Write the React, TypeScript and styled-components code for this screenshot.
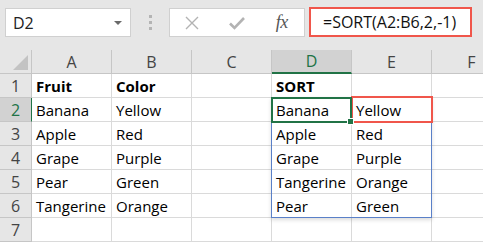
import React from 'react';
import styled, { createGlobalStyle } from 'styled-components';

const GlobalStyle = createGlobalStyle`
  html, body {
    margin: 0;
    padding: 0;
    background: #ffffff;
    overflow: hidden;
  }
  body {
    font-family: "Open Sans", "Noto Sans", "DejaVu Sans", sans-serif;
  }
`;

const GREEN = '#217346';

const Window = styled.div`
  width: 483px;
  height: 242px;
  overflow: hidden;
  background: #ffffff;
`;

const FormulaBar = styled.div`
  display: flex;
  align-items: flex-start;
  box-sizing: border-box;
  height: 50px;
  padding: 8px 0 0 5px;
  background: #e6e6e6;
`;

const NameBox = styled.div`
  display: flex;
  align-items: center;
  justify-content: space-between;
  box-sizing: border-box;
  width: 126px;
  height: 29px;
  padding: 0 8px 0 7px;
  background: #ffffff;
  border: 1px solid #d0d0d0;
  font-size: 16px;
  color: #222;
`;

const Caret = styled.span`
  width: 0;
  height: 0;
  border-left: 4px solid transparent;
  border-right: 4px solid transparent;
  border-top: 4px solid #6a6a6a;
`;

const Grip = styled.div`
  display: flex;
  flex-direction: column;
  align-items: center;
  justify-content: center;
  gap: 3px;
  width: 38px;
  height: 29px;
`;

const GripDot = styled.span`
  width: 3px;
  height: 3px;
  background: #b4b4b4;
`;

const IconBox = styled.div`
  display: flex;
  align-items: center;
  box-sizing: border-box;
  width: 136px;
  height: 29px;
  background: #ffffff;
  border: 1px solid #d0d0d0;
`;

const IconSlot = styled.span`
  display: flex;
  align-items: center;
  justify-content: center;
  width: 45px;
  height: 100%;
`;

const Fx = styled.span`
  font-family: "Liberation Serif", "DejaVu Serif", serif;
  font-style: italic;
  font-size: 18px;
  color: #555;
  letter-spacing: -0.5px;
`;

const FormulaInput = styled.div`
  display: flex;
  align-items: center;
  box-sizing: border-box;
  width: 163px;
  height: 30px;
  margin: -1px 0 0 4px;
  padding-left: 12px;
  background: #ffffff;
  border: 2px solid #f0564b;
  font-size: 16px;
  color: #111;
`;

const SheetArea = styled.div`
  position: relative;
  width: 512px;
`;

const Sheet = styled.div`
  display: grid;
  grid-template-columns: 32px repeat(6, 80px);
  grid-auto-rows: 24px;
`;

const Overlay = styled(Sheet)`
  position: absolute;
  inset: 0;
  pointer-events: none;
`;

const Corner = styled.div`
  position: relative;
  box-sizing: border-box;
  background: #e6e6e6;
  border-right: 1px solid #c6c6c6;
  border-bottom: 1px solid #c6c6c6;
`;

const CornerTriangle = styled.span`
  position: absolute;
  right: 3px;
  bottom: 3px;
  width: 0;
  height: 0;
  border-left: 15px solid transparent;
  border-bottom: 15px solid #c3c3c3;
`;

const ColHeader = styled.div<{ $active?: boolean }>`
  display: flex;
  align-items: center;
  justify-content: center;
  box-sizing: border-box;
  background: ${(p) => (p.$active ? '#d2d2d2' : '#e6e6e6')};
  border-right: 1px solid #c6c6c6;
  border-bottom: ${(p) => (p.$active ? `2px solid ${GREEN}` : '1px solid #c6c6c6')};
  font-size: 16px;
  line-height: 24px;
  color: ${(p) => (p.$active ? GREEN : '#444')};
`;

const RowHeader = styled.div<{ $active?: boolean }>`
  display: flex;
  align-items: center;
  justify-content: center;
  box-sizing: border-box;
  background: ${(p) => (p.$active ? '#d2d2d2' : '#e6e6e6')};
  border-right: 1px solid ${(p) => (p.$active ? GREEN : '#c6c6c6')};
  border-bottom: 1px solid #c6c6c6;
  font-size: 16px;
  line-height: 24px;
  color: ${(p) => (p.$active ? GREEN : '#444')};
`;

const Cell = styled.div<{ $bold?: boolean }>`
  box-sizing: border-box;
  padding-left: 4px;
  border-right: 1px solid #dadada;
  border-bottom: 1px solid #dadada;
  font-size: 15px;
  line-height: 24px;
  font-weight: ${(p) => (p.$bold ? 700 : 400)};
  color: #000;
  white-space: nowrap;
  overflow: hidden;
`;

const Range = styled.div<{ $col: string; $row: string }>`
  grid-column: ${(p) => p.$col};
  grid-row: ${(p) => p.$row};
  margin: -1px 0 0 -1px;
`;

const SpillRange = styled(Range)`
  border: 1px solid #5a80c8;
  box-shadow: 0 2px 4px rgba(0, 0, 0, 0.14);
`;

const ActiveCell = styled(Range)`
  position: relative;
  margin: -1px 0 -1px -1px;
  border: 2px solid ${GREEN};
`;

const FillHandle = styled.span`
  position: absolute;
  right: -4px;
  bottom: -4px;
  width: 5px;
  height: 5px;
  background: ${GREEN};
  border: 1px solid #ffffff;
`;

const Callout = styled(Range)`
  margin: -2px -1px -1px -1px;
  border: 2px solid #f0564b;
`;

const columns = ['A', 'B', 'C', 'D', 'E', 'F'];

const rows: string[][] = [
  ['Fruit', 'Color', '', 'SORT', '', ''],
  ['Banana', 'Yellow', '', 'Banana', 'Yellow', ''],
  ['Apple', 'Red', '', 'Apple', 'Red', ''],
  ['Grape', 'Purple', '', 'Grape', 'Purple', ''],
  ['Pear', 'Green', '', 'Tangerine', 'Orange', ''],
  ['Tangerine', 'Orange', '', 'Pear', 'Green', ''],
  ['', '', '', '', '', ''],
];

const CancelIcon = () => (
  <svg width="16" height="16" viewBox="0 0 16 16">
    <path d="M2 2 L14 14 M14 2 L2 14" stroke="#b3b3b3" strokeWidth="1.4" fill="none" />
  </svg>
);

const EnterIcon = () => (
  <svg width="18" height="16" viewBox="0 0 18 16">
    <path d="M2 8.5 L6.5 13 L16 3" stroke="#b3b3b3" strokeWidth="2.6" fill="none" />
  </svg>
);

const App = () => {
  return (
    <Window>
      <GlobalStyle />
      <FormulaBar>
        <NameBox>
          D2
          <Caret />
        </NameBox>
        <Grip>
          <GripDot />
          <GripDot />
          <GripDot />
        </Grip>
        <IconBox>
          <IconSlot>
            <CancelIcon />
          </IconSlot>
          <IconSlot>
            <EnterIcon />
          </IconSlot>
          <IconSlot>
            <Fx>fx</Fx>
          </IconSlot>
        </IconBox>
        <FormulaInput>=SORT(A2:B6,2,-1)</FormulaInput>
      </FormulaBar>

      <SheetArea>
        <Sheet>
          <Corner>
            <CornerTriangle />
          </Corner>
          {columns.map((c) => (
            <ColHeader key={c} $active={c === 'D'}>
              {c}
            </ColHeader>
          ))}
          {rows.map((row, r) => (
            <React.Fragment key={r}>
              <RowHeader $active={r === 1}>{r + 1}</RowHeader>
              {row.map((value, c) => (
                <Cell key={c} $bold={r === 0}>
                  {value}
                </Cell>
              ))}
            </React.Fragment>
          ))}
        </Sheet>
        <Overlay>
          <SpillRange $col="5 / 7" $row="3 / 8" />
          <Callout $col="6 / 7" $row="3 / 4" />
          <ActiveCell $col="5 / 6" $row="3 / 4">
            <FillHandle />
          </ActiveCell>
        </Overlay>
      </SheetArea>
    </Window>
  );
};

export default App;
